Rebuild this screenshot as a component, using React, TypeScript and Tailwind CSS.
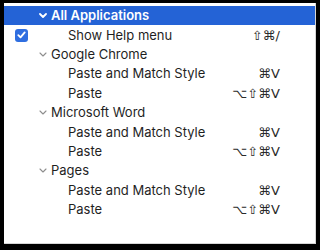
import React from 'react';

type Row = {
  label: string;
  level: 0 | 1 | 2;
  shortcut?: string;
  checkbox?: boolean;
  selected?: boolean;
};

const rows: Row[] = [
  { label: 'All Applications', level: 0, selected: true },
  { label: 'Show Help menu', level: 2, shortcut: '⇧⌘/', checkbox: true },
  { label: 'Google Chrome', level: 1 },
  { label: 'Paste and Match Style', level: 2, shortcut: '⌘V' },
  { label: 'Paste', level: 2, shortcut: '⌥⇧⌘V' },
  { label: 'Microsoft Word', level: 1 },
  { label: 'Paste and Match Style', level: 2, shortcut: '⌘V' },
  { label: 'Paste', level: 2, shortcut: '⌥⇧⌘V' },
  { label: 'Pages', level: 1 },
  { label: 'Paste and Match Style', level: 2, shortcut: '⌘V' },
  { label: 'Paste', level: 2, shortcut: '⌥⇧⌘V' },
];

const Chevron = ({ white }: { white?: boolean }) => (
  <svg width="8" height="5" viewBox="0 0 8 5" className="block">
    <path
      d="M1 1 L4 4 L7 1"
      fill="none"
      stroke={white ? '#ffffff' : '#8e8e8e'}
      strokeWidth={white ? 1.8 : 1.1}
      strokeLinecap="round"
      strokeLinejoin="round"
    />
  </svg>
);

const Checkbox = () => (
  <div className="w-[13px] h-[13px] rounded-[3px] bg-[#2f6ee0] flex items-center justify-center">
    <svg width="9" height="8" viewBox="0 0 9 8">
      <path d="M1.3 4.2 L3.5 6.4 L7.7 1.4" fill="none" stroke="#fff" strokeWidth="1.8" strokeLinecap="round" strokeLinejoin="round" />
    </svg>
  </div>
);

export default function App() {
  return (
    <div className="w-[320px] h-[250px] bg-black pl-[4px] pt-[3px] pr-[4px] pb-[6px]">
      <div className="h-full bg-white border-r border-b border-[#d6d6d6] pt-[3px]" style={{ fontFamily: 'Inter, "Liberation Sans", sans-serif' }}>
        {rows.map((r, i) => (
          <div
            key={i}
            className={`h-[19.4px] flex items-center pr-[35px] ${r.selected ? 'bg-[#2463d6] text-white' : 'text-[#1f1f1f]'}`}
          >
            {r.checkbox ? (
              <div className="w-[64px] pl-[11px] flex items-center">
                <Checkbox />
              </div>
            ) : r.level === 2 ? (
              <div className="w-[64px]" />
            ) : (
              <div className="w-[47px] pl-[35px] flex items-center">
                <Chevron white={r.selected} />
              </div>
            )}
            <span className={`text-[13px] leading-none ${r.selected ? 'font-semibold' : ''}`}>{r.label}</span>
            {r.shortcut && (
              <span className="ml-auto text-[13px] leading-none text-[#2a2a2a]" style={{ fontFamily: '"DejaVu Sans", sans-serif' }}>
                {r.shortcut}
              </span>
            )}
          </div>
        ))}
      </div>
    </div>
  );
}
